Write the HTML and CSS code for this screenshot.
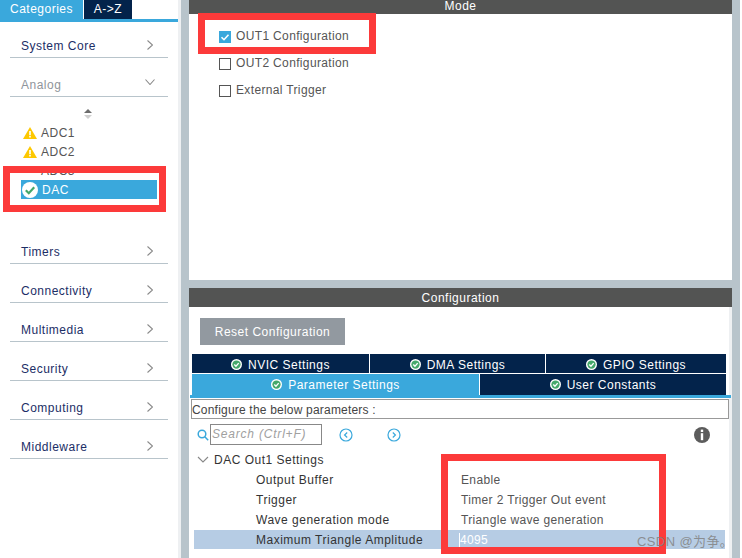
FILE: index.html
```html
<!DOCTYPE html>
<html lang="en">
<head>
    <meta charset="UTF-8">
    <meta name="viewport" content="width=device-width, initial-scale=1.0">
    <title>DAC Configuration</title>
    <link rel="stylesheet" href="styles.css">
</head>
<body>
    <div class="app">
        <aside class="sidebar">
            <div class="side-tabs">
                <div class="side-tab active">Categories</div>
                <div class="side-tab">A-&gt;Z</div>
            </div>
            <div class="cat first"><span>System Core</span><svg class="chev" viewBox="0 0 6 10"><path d="M0.5 0.5L5.5 5 0.5 9.5"/></svg></div>
            <div class="cat open"><span>Analog</span><svg class="chev down" viewBox="0 0 10 6"><path d="M0.5 0.5L5 5.5 9.5 0.5"/></svg></div>
            <div class="sort"><i class="up"></i><i class="dn"></i></div>
            <div class="periph"><svg class="warn" viewBox="0 0 14 12"><path d="M7 0l7 12H0z"/><path class="mark" d="M6.2 4h1.6v4.2H6.2zM6.2 9h1.6v1.6H6.2z"/></svg>ADC1</div>
            <div class="periph"><svg class="warn" viewBox="0 0 14 12"><path d="M7 0l7 12H0z"/><path class="mark" d="M6.2 4h1.6v4.2H6.2zM6.2 9h1.6v1.6H6.2z"/></svg>ADC2</div>
            <div class="periph plain">ADC3</div>
            <div class="periph selected"><svg class="ok big" viewBox="0 0 16 16"><circle cx="8" cy="8" r="8" fill="#fff"/><path d="M3.8 8.2l3 3 5.4-6" fill="none" stroke="#45a86b" stroke-width="2.2"/></svg>DAC</div>
            <div class="cat timers"><span>Timers</span><svg class="chev" viewBox="0 0 6 10"><path d="M0.5 0.5L5.5 5 0.5 9.5"/></svg></div>
            <div class="cat"><span>Connectivity</span><svg class="chev" viewBox="0 0 6 10"><path d="M0.5 0.5L5.5 5 0.5 9.5"/></svg></div>
            <div class="cat"><span>Multimedia</span><svg class="chev" viewBox="0 0 6 10"><path d="M0.5 0.5L5.5 5 0.5 9.5"/></svg></div>
            <div class="cat"><span>Security</span><svg class="chev" viewBox="0 0 6 10"><path d="M0.5 0.5L5.5 5 0.5 9.5"/></svg></div>
            <div class="cat"><span>Computing</span><svg class="chev" viewBox="0 0 6 10"><path d="M0.5 0.5L5.5 5 0.5 9.5"/></svg></div>
            <div class="cat"><span>Middleware</span><svg class="chev" viewBox="0 0 6 10"><path d="M0.5 0.5L5.5 5 0.5 9.5"/></svg></div>
        </aside>

        <main class="main">
            <section class="mode">
                <div class="panel-title">Mode</div>
                <div class="mode-body">
                    <label class="check"><span class="box on"><svg viewBox="0 0 12 12"><path d="M2.5 6.2l2.5 2.5 4.5-5" fill="none" stroke="#fff" stroke-width="1.6"/></svg></span>OUT1 Configuration</label>
                    <label class="check"><span class="box"></span>OUT2 Configuration</label>
                    <label class="check"><span class="box"></span>External Trigger</label>
                </div>
            </section>

            <section class="config">
                <div class="panel-title tall">Configuration</div>
                <div class="config-body">
                    <div class="reset">Reset Configuration</div>
                    <div class="tabs three">
                        <div class="tab"><svg class="ok" viewBox="0 0 16 16"><circle cx="8" cy="8" r="8" fill="#fff"/><circle cx="8" cy="8" r="6" fill="#45a86b"/><path d="M4.8 8l2.4 2.4 4-4.4" fill="none" stroke="#fff" stroke-width="2"/></svg>NVIC Settings</div>
                        <div class="tab"><svg class="ok" viewBox="0 0 16 16"><circle cx="8" cy="8" r="8" fill="#fff"/><circle cx="8" cy="8" r="6" fill="#45a86b"/><path d="M4.8 8l2.4 2.4 4-4.4" fill="none" stroke="#fff" stroke-width="2"/></svg>DMA Settings</div>
                        <div class="tab"><svg class="ok" viewBox="0 0 16 16"><circle cx="8" cy="8" r="8" fill="#fff"/><circle cx="8" cy="8" r="6" fill="#45a86b"/><path d="M4.8 8l2.4 2.4 4-4.4" fill="none" stroke="#fff" stroke-width="2"/></svg>GPIO Settings</div>
                    </div>
                    <div class="tabs two">
                        <div class="tab active"><svg class="ok" viewBox="0 0 16 16"><circle cx="8" cy="8" r="8" fill="#fff"/><circle cx="8" cy="8" r="6" fill="#45a86b"/><path d="M4.8 8l2.4 2.4 4-4.4" fill="none" stroke="#fff" stroke-width="2"/></svg>Parameter Settings</div>
                        <div class="tab"><svg class="ok" viewBox="0 0 16 16"><circle cx="8" cy="8" r="8" fill="#fff"/><circle cx="8" cy="8" r="6" fill="#45a86b"/><path d="M4.8 8l2.4 2.4 4-4.4" fill="none" stroke="#fff" stroke-width="2"/></svg>User Constants</div>
                    </div>
                    <div class="tab-line"></div>
                    <div class="hint">Configure the below parameters :</div>
                    <div class="search-row">
                        <svg class="loupe" viewBox="0 0 12 12"><circle cx="5" cy="5" r="3.8"/><path d="M7.8 7.8l3.4 3.4"/></svg>
                        <div class="search">Search (Ctrl+F)</div>
                        <svg class="nav" viewBox="0 0 14 14"><circle cx="7" cy="7" r="6"/><path d="M8.2 4.5L5.6 7l2.6 2.5"/></svg>
                        <svg class="nav" viewBox="0 0 14 14"><circle cx="7" cy="7" r="6"/><path d="M5.8 4.5L8.4 7 5.8 9.5"/></svg>
                        <svg class="info" viewBox="0 0 16 16"><circle cx="8" cy="8" r="8" fill="#5c5c5c"/><rect x="6.8" y="2.6" width="2.4" height="2.4" fill="#fff"/><rect x="6.8" y="6.2" width="2.4" height="7" fill="#fff"/></svg>
                    </div>
                    <div class="tree-head"><svg class="tree-arrow" viewBox="0 0 12 8"><path d="M1 1l5 5 5-5"/></svg>DAC Out1 Settings</div>
                    <div class="param"><span class="name">Output Buffer</span><span class="value">Enable</span></div>
                    <div class="param"><span class="name">Trigger</span><span class="value">Timer 2 Trigger Out event</span></div>
                    <div class="param"><span class="name">Wave generation mode</span><span class="value">Triangle wave generation</span></div>
                    <div class="param selected"><span class="name">Maximum Triangle Amplitude</span><span class="value">4095</span></div>
                </div>
            </section>
        </main>
    </div>

    <!-- annotations drawn over the screenshot -->
    <div class="mark-box m1"></div>
    <div class="mark-box m2"></div>
    <div class="mark-box m3"></div>
    <div class="watermark">CSDN @为争。</div>
</body>
</html>
```

FILE: styles.css
```css
* {
    margin: 0;
    padding: 0;
    box-sizing: border-box;
}

body {
    width: 742px;
    height: 558px;
    overflow: hidden;
    position: relative;
    background: #fff;
    font-family: "Liberation Sans", Arial, sans-serif;
    font-size: 12px;
    letter-spacing: 0.5px;
    color: #555;
}

.app {
    display: flex;
    width: 740px;
    height: 558px;
    background: #b8c4cb;
}

/* left column */
.sidebar {
    width: 181px;
    background: #fff;
    border-right: 3px solid #eef0f2;
}

.side-tabs {
    display: flex;
    height: 22px;
    border-bottom: 3px solid #3aa8dc;
    gap: 1px;
}

.side-tab {
    width: 48px;
    background: #03234b;
    color: #fff;
    text-align: center;
    line-height: 18px;
}

.side-tab.active {
    width: 83px;
    background: #3aa8dc;
}

.cat {
    display: flex;
    justify-content: space-between;
    align-items: center;
    height: 39px;
    margin-left: 10px;
    width: 158px;
    padding: 15px 15px 0 11px;
    border-bottom: 1px solid #b8c4cb;
    color: #1c2e66;
}

.cat.first {
    height: 36px;
    padding-top: 12px;
}

.cat.open {
    color: #8f959b;
}

.cat.timers {
    margin-top: 26px;
}

.chev {
    width: 6px;
    height: 10px;
    margin-top: -2px;
    fill: none;
    stroke: #8a8a8a;
    stroke-width: 1.1;
}

.chev.down {
    width: 10px;
    height: 6px;
    margin-right: -2px;
    margin-top: -5px;
}

.sort {
    display: flex;
    flex-direction: column;
    align-items: center;
    gap: 2px;
    height: 14px;
    margin-top: 12px;
    width: 176px;
}

.sort i {
    width: 0;
    height: 0;
    border-left: 4px solid transparent;
    border-right: 4px solid transparent;
}

.sort .up {
    border-bottom: 4px solid #6d6d6d;
}

.sort .dn {
    border-top: 4px solid #cfcfcf;
}

.periph {
    display: flex;
    align-items: center;
    gap: 4px;
    height: 19px;
    margin-left: 23px;
    color: #555;
}

.periph.plain {
    margin-left: 41px;
}

.periph.selected {
    width: 136px;
    margin-left: 21px;
    background: #3aa8dc;
    color: #fff;
    padding-left: 1px;
}

.warn {
    width: 14px;
    height: 12px;
    fill: #fdc800;
}

.warn .mark {
    fill: #fff;
}

.ok {
    width: 11px;
    height: 11px;
    flex: none;
}

.ok.big {
    width: 16px;
    height: 16px;
}

/* right column */
.main {
    margin-left: 8px;
    width: 543px;
    display: flex;
    flex-direction: column;
    gap: 8px;
}

.panel-title {
    height: 14px;
    background: #535453;
    color: #fff;
    text-align: center;
    line-height: 12px;
}

.panel-title.tall {
    height: 19px;
    line-height: 20px;
}

.mode {
    height: 280px;
    background: #fff;
}

.mode-body {
    padding: 8px 0 0 30px;
}

.check {
    display: flex;
    align-items: center;
    gap: 5px;
    height: 27px;
    letter-spacing: 0.35px;
}

.box {
    width: 12px;
    height: 12px;
    margin-top: 2px;
    border: 1px solid #555;
    background: #fff;
}

.box.on {
    border: none;
    background: #3aa8dc;
}

.box svg {
    display: block;
    width: 12px;
    height: 12px;
}

.config {
    flex: 1;
    background: #eef0f2;
}

.config-body {
    width: 540px;
    height: 251px;
    background: #fff;
    padding: 11px 0 0 1px;
}

.reset {
    margin-left: 10px;
    width: 145px;
    height: 27px;
    background: #9299a0;
    color: #fff;
    text-align: center;
    line-height: 28px;
}

.tabs {
    display: flex;
    gap: 1px;
    margin-left: 2px;
    width: 534px;
}

.tabs.three {
    margin-top: 9px;
    height: 19px;
    margin-bottom: 1px;
}

.tabs.three .tab {
    width: 177px;
    padding-top: 2px;
}

.tabs.three .tab + .tab {
    width: 175px;
}

.tabs.three .tab + .tab + .tab {
    width: 180px;
}

.tabs.two {
    height: 21px;
}

.tabs.two .tab {
    width: 246px;
}

.tabs.two .tab.active {
    width: 287px;
}

.tab {
    display: flex;
    align-items: center;
    justify-content: center;
    gap: 6px;
    background: #03234b;
    color: #fff;
}

.tab.active {
    background: #3aa8dc;
}

.tab-line {
    height: 3px;
    background: #3aa8dc;
    width: 541px;
}

.hint {
    margin: 1px 0 0 1px;
    width: 538px;
    height: 20px;
    border: 1px solid #999;
    line-height: 20px;
    letter-spacing: 0.2px;
    color: #444;
}

.search-row {
    display: flex;
    align-items: center;
    height: 21px;
    margin-top: 5px;
    padding-left: 7px;
}

.loupe {
    width: 12px;
    height: 12px;
    fill: none;
    stroke: #3aa8dc;
    stroke-width: 1.5;
}

.search {
    width: 112px;
    height: 21px;
    margin-left: 1px;
    border: 1px solid #888;
    color: #a0a0a0;
    font-style: italic;
    letter-spacing: 0.8px;
    line-height: 19px;
    padding-left: 1px;
}

.nav {
    width: 14px;
    height: 14px;
    fill: none;
    stroke: #3aa8dc;
    stroke-width: 1.2;
    margin-left: 17px;
}

.nav + .nav {
    margin-left: 34px;
}

.info {
    width: 16px;
    height: 16px;
    margin-left: 293px;
}

.tree-head {
    display: flex;
    align-items: center;
    gap: 5px;
    height: 20px;
    margin-top: 5px;
    padding-left: 7px;
    color: #333;
}

.tree-arrow {
    width: 12px;
    height: 8px;
    fill: none;
    stroke: #888;
    stroke-width: 1.1;
}

.param {
    display: flex;
    align-items: center;
    height: 20px;
    margin-left: 4px;
    width: 531px;
    padding-left: 62px;
}

.param .name {
    width: 205px;
    color: #333;
}

.value {
    letter-spacing: 0.35px;
}

.param.selected {
    height: 19px;
    background: #b6cce4;
}

.param.selected .value {
    color: #fff;
    border-left: 1px solid #fff;
    margin-left: -2px;
}

/* red marker boxes, watermark */
.mark-box {
    position: absolute;
    border: 7px solid #fc3a3a;
}

.m1 {
    left: 3px;
    top: 166px;
    width: 163px;
    height: 46px;
}

.m2 {
    left: 198px;
    top: 13px;
    width: 178px;
    height: 41px;
}

.m3 {
    left: 441px;
    top: 454px;
    width: 225px;
    height: 100px;
}

.watermark {
    position: absolute;
    left: 637px;
    top: 531px;
    font-family: "Liberation Sans", "Noto Sans CJK SC", sans-serif;
    font-size: 13px;
    letter-spacing: 0.4px;
    color: rgba(130, 130, 130, 0.85);
}
```
